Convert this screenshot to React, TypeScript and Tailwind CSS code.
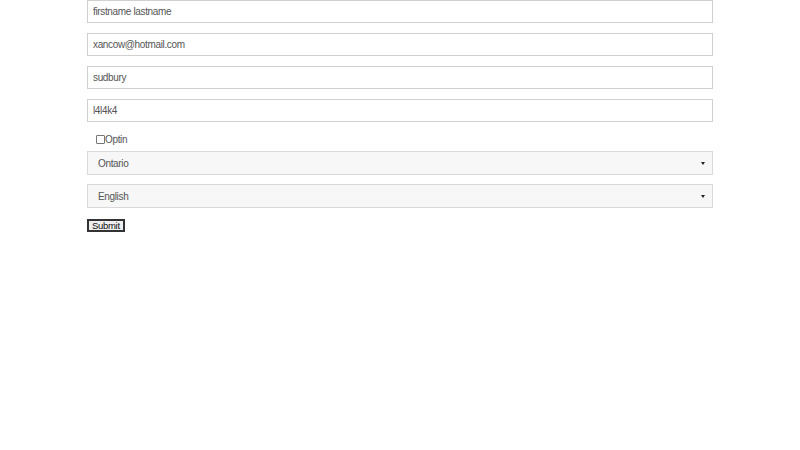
export default function App() {
  const inputs = ["firstname lastname", "xancow@hotmail.com", "sudbury", "l4l4k4"];
  return (
    <div className="min-h-[450px] bg-white font-['Liberation_Sans',Arial,sans-serif]">
      <form className="mx-auto w-[626px] flex flex-col">
        {inputs.map((v) => (
          <input
            key={v}
            defaultValue={v}
            className="h-[23px] mb-[10px] border border-[#d0d0d0] bg-white px-[5px] text-[10px] tracking-[-0.35px] text-[#555] outline-none"
          />
        ))}
        <label className="flex items-center h-[12px] mt-[1px] ml-[9px] text-[10px] tracking-[-0.35px] text-[#555]">
          <input type="checkbox" className="w-[9px] h-[9px] m-0 appearance-none border border-[#767676] rounded-[1px] bg-white" />
          Optin
        </label>
        <div className="h-[24px] mt-[6px] border border-[#d9d9d9] bg-[#f7f7f7] pl-[10px] pr-[7px] flex items-center justify-between text-[10px] tracking-[-0.35px] text-[#555]">
          <span>Ontario</span>
          <span className="w-0 h-0 border-l-[2px] border-r-[2px] border-t-[3px] border-l-transparent border-r-transparent border-t-[#222]" />
        </div>
        <div className="h-[24px] mt-[9px] border border-[#d9d9d9] bg-[#f7f7f7] pl-[10px] pr-[7px] flex items-center justify-between text-[10px] tracking-[-0.35px] text-[#555]">
          <span>English</span>
          <span className="w-0 h-0 border-l-[2px] border-r-[2px] border-t-[3px] border-l-transparent border-r-transparent border-t-[#222]" />
        </div>
        <div className="mt-[11px] flex">
          <button type="button" className="h-[13px] px-[3px] border-2 border-[#333] bg-[#efefef] text-[9.5px] tracking-[-0.3px] leading-none text-[#111]">
            Submit
          </button>
        </div>
      </form>
    </div>
  );
}
